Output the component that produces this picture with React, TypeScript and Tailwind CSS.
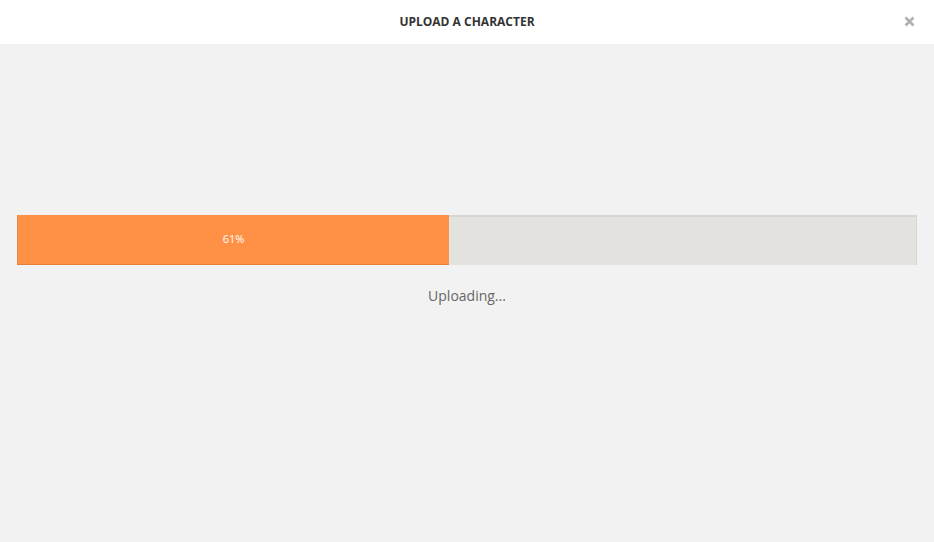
export default function App() {
  return (
    <div
      className="w-[934px] h-[542px] bg-[#f2f2f2] flex flex-col"
      style={{ fontFamily: '"Open Sans", "Noto Sans", sans-serif' }}
    >
      <div className="h-[44px] bg-white flex items-center justify-center relative shrink-0">
        <span className="text-[12px] font-bold text-[#333]">UPLOAD A CHARACTER</span>
        <svg className="absolute left-[904px] top-[16px]" width="11" height="11" viewBox="0 0 11 11">
          <path d="M1.5 1.5 L9.5 9.5 M9.5 1.5 L1.5 9.5" stroke="#b0b0b0" strokeWidth="2.6" strokeLinecap="butt" />
        </svg>
      </div>
      <div className="px-[17px] pt-[171px] flex flex-col">
        <div className="h-[50px] w-[900px] flex">
          <div className="w-[432px] bg-[#ff9147] border-b border-b-[#e97f3a] border-l border-l-[#e88a4a] flex items-center justify-center">
            <span className="text-[11px] text-white">61%</span>
          </div>
          <div className="flex-1 bg-[#e3e2df] border-t-2 border-t-[#d7d6d2] border-r border-r-[#d9d8d4]" />
        </div>
        <div className="mt-[20px] text-center text-[14px] text-[#666]">Uploading...</div>
      </div>
    </div>
  );
}
